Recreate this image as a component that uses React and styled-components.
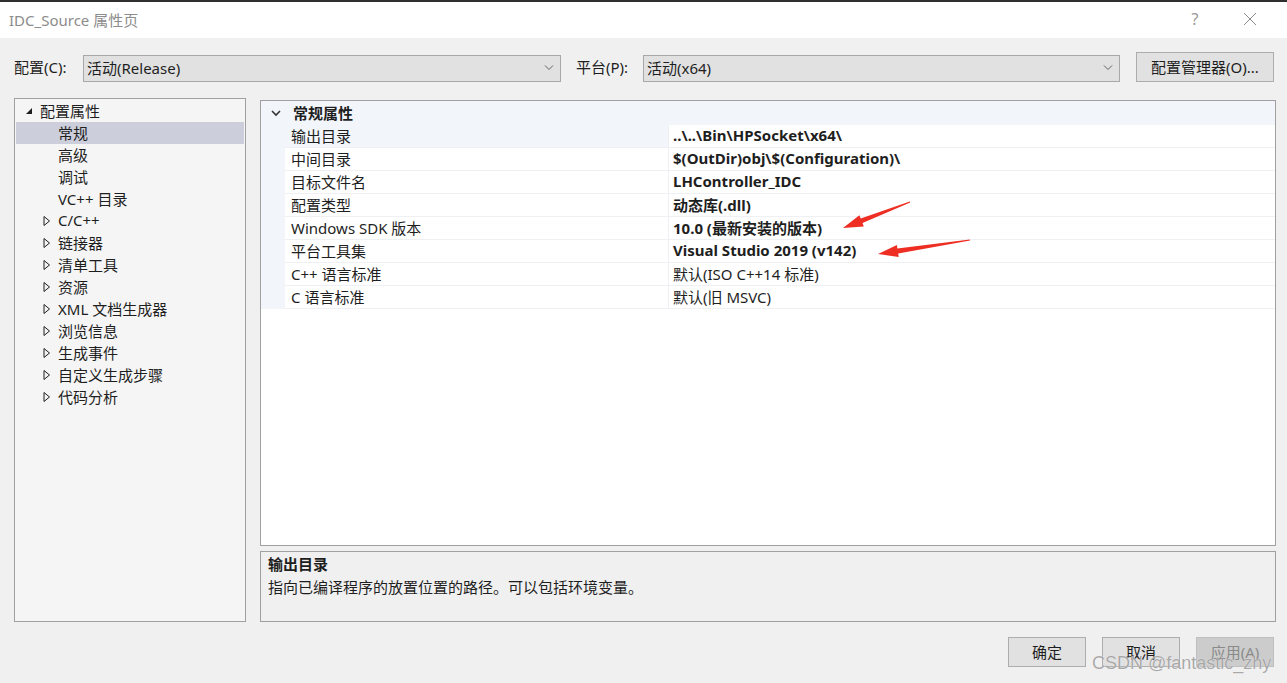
import React from 'react';
import styled, { createGlobalStyle } from 'styled-components';

const GlobalStyle = createGlobalStyle`
	html, body {
		margin: 0;
		padding: 0;
		background: #f0f0f0;
	}
	body {
		font-family: 'Noto Sans', 'Noto Sans CJK SC', sans-serif;
		font-size: 15px;
		color: #1e1e1e;
	}
`;

const Window = styled.div`
	position: relative;
	width: 1287px;
	height: 683px;
	display: flex;
	flex-direction: column;
	background: #f0f0f0;
	overflow: hidden;
`;

const TitleBar = styled.div`
	height: 38px;
	flex-shrink: 0;
	box-sizing: border-box;
	padding: 0 22px 2px 9px;
	border-top: 2px solid #2f2f2f;
	background: #ffffff;
	display: flex;
	align-items: center;
	color: #8c8c8c;
	font-size: 15px;
`;

const TitleText = styled.div`
	flex: 1;
`;

const TitleButton = styled.div`
	width: 30px;
	display: flex;
	justify-content: center;
	align-items: center;
	margin-left: ${(p) => p.gap || 0}px;
	color: #9a9a9a;
	font-size: 16px;
`;

const Body = styled.div`
	flex: 1;
	display: flex;
	flex-direction: column;
	padding: 14px 11px 0 14px;
`;

const TopRow = styled.div`
	display: flex;
	align-items: center;
	height: 30px;
`;

const Label = styled.span`
	width: ${(p) => p.w}px;
	white-space: nowrap;
	padding-bottom: 1px;
`;

const Select = styled.div`
	width: ${(p) => p.w}px;
	height: 27px;
	box-sizing: border-box;
	border: 1px solid #a8a8a8;
	background: #e1e1e1;
	display: flex;
	align-items: center;
	padding: 0 6px 2px 3px;
	margin-top: 3px;
	margin-right: ${(p) => p.mr || 0}px;
	span {
		flex: 1;
	}
`;

const Button = styled.div`
	width: ${(p) => p.w || 78}px;
	height: 30px;
	box-sizing: border-box;
	border: 1px solid ${(p) => (p.disabled ? '#bfbfbf' : '#adadad')};
	background: ${(p) => (p.disabled ? '#cccccc' : '#e1e1e1')};
	color: ${(p) => (p.disabled ? '#8a8a8a' : '#1e1e1e')};
	display: flex;
	align-items: center;
	justify-content: center;
	padding-bottom: 2px;
	margin-left: ${(p) => p.ml || 0}px;
`;

const Main = styled.div`
	display: flex;
	margin-top: 16px;
	height: 524px;
`;

const Tree = styled.div`
	width: 232px;
	box-sizing: border-box;
	border: 1px solid #a0a0a0;
	background: #f5f5f5;
	padding: 1px 1px;
`;

const TreeRow = styled.div`
	height: 22px;
	box-sizing: border-box;
	padding-bottom: 2px;
	display: flex;
	align-items: center;
	padding-left: ${(p) => p.indent}px;
	background: ${(p) => (p.selected ? '#cccedb' : 'transparent')};
	white-space: nowrap;
`;

const TreeIcon = styled.span`
	width: ${(p) => p.w}px;
	display: flex;
	align-items: center;
	padding-top: 2px;
`;

const RightCol = styled.div`
	flex: 1;
	margin-left: 14px;
	display: flex;
	flex-direction: column;
	padding-top: 2px;
`;

const Grid = styled.div`
	height: 446px;
	box-sizing: border-box;
	border: 1px solid #a0a0a0;
	background: #ffffff;
`;

const GridHeader = styled.div`
	height: 24px;
	box-sizing: border-box;
	padding-bottom: 2px;
	display: flex;
	align-items: center;
	background: #f2f5fa;
	font-weight: bold;
	span {
		width: 30px;
		display: flex;
		justify-content: center;
		padding: 2px 2px 0 0;
	}
`;

const GridRow = styled.div`
	height: 23px;
	display: flex;
	background: #f2f5fa;
`;

const NameCell = styled.div`
	margin-left: 24px;
	width: 384px;
	box-sizing: border-box;
	padding: 0 0 2px 6px;
	display: flex;
	align-items: center;
	background: ${(p) => (p.selected ? '#f2f5fa' : '#ffffff')};
	border-bottom: 1px solid #eef0f4;
	border-right: 1px solid #eef0f4;
	white-space: nowrap;
`;

const ValueCell = styled.div`
	flex: 1;
	box-sizing: border-box;
	padding: 0 0 2px 4px;
	display: flex;
	align-items: center;
	background: #ffffff;
	border-bottom: 1px solid #eef0f4;
	font-weight: ${(p) => (p.bold ? 'bold' : 'normal')};
	white-space: nowrap;
`;

const Description = styled.div`
	margin-top: 5px;
	height: 71px;
	box-sizing: border-box;
	border: 1px solid #a0a0a0;
	padding: 1px 7px;
	line-height: 23px;
	strong {
		display: block;
	}
`;

const Footer = styled.div`
	display: flex;
	justify-content: flex-end;
	padding-right: 2px;
	margin-top: 15px;
`;

const Overlay = styled.svg`
	position: absolute;
	left: 0;
	top: 0;
	pointer-events: none;
`;

const Watermark = styled.div`
	position: absolute;
	left: 1092px;
	top: 653px;
	font-family: 'Liberation Sans', Arial, sans-serif;
	font-size: 18px;
	line-height: 20px;
	color: rgba(140, 140, 140, 0.75);
	text-shadow: 0 0 1px #fff;
	white-space: nowrap;
`;

const Chevron = () => (
	<svg width="10" height="6" viewBox="0 0 10 6">
		<path d="M1 0.5 L5 4.5 L9 0.5" fill="none" stroke="#606060" strokeWidth="1" />
	</svg>
);

const treeItems = [
	{ text: '配置属性', level: 0, icon: 'open' },
	{ text: '常规', level: 1, selected: true },
	{ text: '高级', level: 1 },
	{ text: '调试', level: 1 },
	{ text: 'VC++ 目录', level: 1 },
	{ text: 'C/C++', level: 1, icon: 'closed' },
	{ text: '链接器', level: 1, icon: 'closed' },
	{ text: '清单工具', level: 1, icon: 'closed' },
	{ text: '资源', level: 1, icon: 'closed' },
	{ text: 'XML 文档生成器', level: 1, icon: 'closed' },
	{ text: '浏览信息', level: 1, icon: 'closed' },
	{ text: '生成事件', level: 1, icon: 'closed' },
	{ text: '自定义生成步骤', level: 1, icon: 'closed' },
	{ text: '代码分析', level: 1, icon: 'closed' },
];

const props = [
	{ name: '输出目录', value: '..\\..\\Bin\\HPSocket\\x64\\', bold: true, selected: true },
	{ name: '中间目录', value: '$(OutDir)obj\\$(Configuration)\\', bold: true },
	{ name: '目标文件名', value: 'LHController_IDC', bold: true },
	{ name: '配置类型', value: '动态库(.dll)', bold: true },
	{ name: 'Windows SDK 版本', value: '10.0 (最新安装的版本)', bold: true },
	{ name: '平台工具集', value: 'Visual Studio 2019 (v142)', bold: true },
	{ name: 'C++ 语言标准', value: '默认(ISO C++14 标准)' },
	{ name: 'C 语言标准', value: '默认(旧 MSVC)' },
];

function TreeNode({ item }) {
	if (item.level === 0) {
		return (
			<TreeRow indent={9}>
				<TreeIcon w={15}>
					<svg width="8" height="8" viewBox="0 0 8 8">
						<path d="M7 1 L7 7 L1 7 Z" fill="#1e1e1e" />
					</svg>
				</TreeIcon>
				{item.text}
			</TreeRow>
		);
	}
	return (
		<TreeRow indent={27} selected={item.selected}>
			<TreeIcon w={15}>
				{item.icon === 'closed' && (
					<svg width="8" height="10" viewBox="0 0 8 10">
						<path d="M1 0.5 L6.5 5 L1 9.5 Z" fill="none" stroke="#1e1e1e" strokeWidth="1" />
					</svg>
				)}
			</TreeIcon>
			{item.text}
		</TreeRow>
	);
}

export default function App() {
	return (
		<Window>
			<GlobalStyle />
			<TitleBar>
				<TitleText>IDC_Source 属性页</TitleText>
				<TitleButton>?</TitleButton>
				<TitleButton gap={25}>
					<svg width="14" height="14" viewBox="0 0 14 14">
						<path d="M1 1 L13 13 M13 1 L1 13" stroke="#8a8a8a" strokeWidth="1" />
					</svg>
				</TitleButton>
			</TitleBar>
			<Body>
				<TopRow>
					<Label w={69}>配置(C):</Label>
					<Select w={478} mr={15}>
						<span>活动(Release)</span>
						<Chevron />
					</Select>
					<Label w={67}>平台(P):</Label>
					<Select w={477} mr={16}>
						<span>活动(x64)</span>
						<Chevron />
					</Select>
					<Button w={138}>配置管理器(O)...</Button>
				</TopRow>
				<Main>
					<Tree>
						{treeItems.map((item) => (
							<TreeNode key={item.text} item={item} />
						))}
					</Tree>
					<RightCol>
						<Grid>
							<GridHeader>
								<span>
									<svg width="10" height="7" viewBox="0 0 10 7">
										<path d="M1 1 L5 5 L9 1" fill="none" stroke="#333" strokeWidth="1.6" />
									</svg>
								</span>
								常规属性
							</GridHeader>
							{props.map((p) => (
								<GridRow key={p.name}>
									<NameCell selected={p.selected}>{p.name}</NameCell>
									<ValueCell bold={p.bold}>{p.value}</ValueCell>
								</GridRow>
							))}
						</Grid>
						<Description>
							<strong>输出目录</strong>
							指向已编译程序的放置位置的路径。可以包括环境变量。
						</Description>
					</RightCol>
				</Main>
				<Footer>
					<Button>确定</Button>
					<Button ml={16}>取消</Button>
					<Button ml={16} disabled>
						应用(A)
					</Button>
				</Footer>
			</Body>
			<Overlay width="1287" height="683" viewBox="0 0 1287 683">
				<polygon
					points="909.8,201.5 860.7,218.5 859.4,215.2 843,228 863.8,226.4 862.5,223.1 910.2,202.5"
					fill="#ee2e22"
				/>
				<polygon
					points="969.9,239.5 897.4,248.5 896.9,245.1 878,254 898.7,256.9 898.2,253.5 970.1,240.5"
					fill="#ee2e22"
				/>
			</Overlay>
			<Watermark>CSDN @fantastic_zhy</Watermark>
		</Window>
	);
}
